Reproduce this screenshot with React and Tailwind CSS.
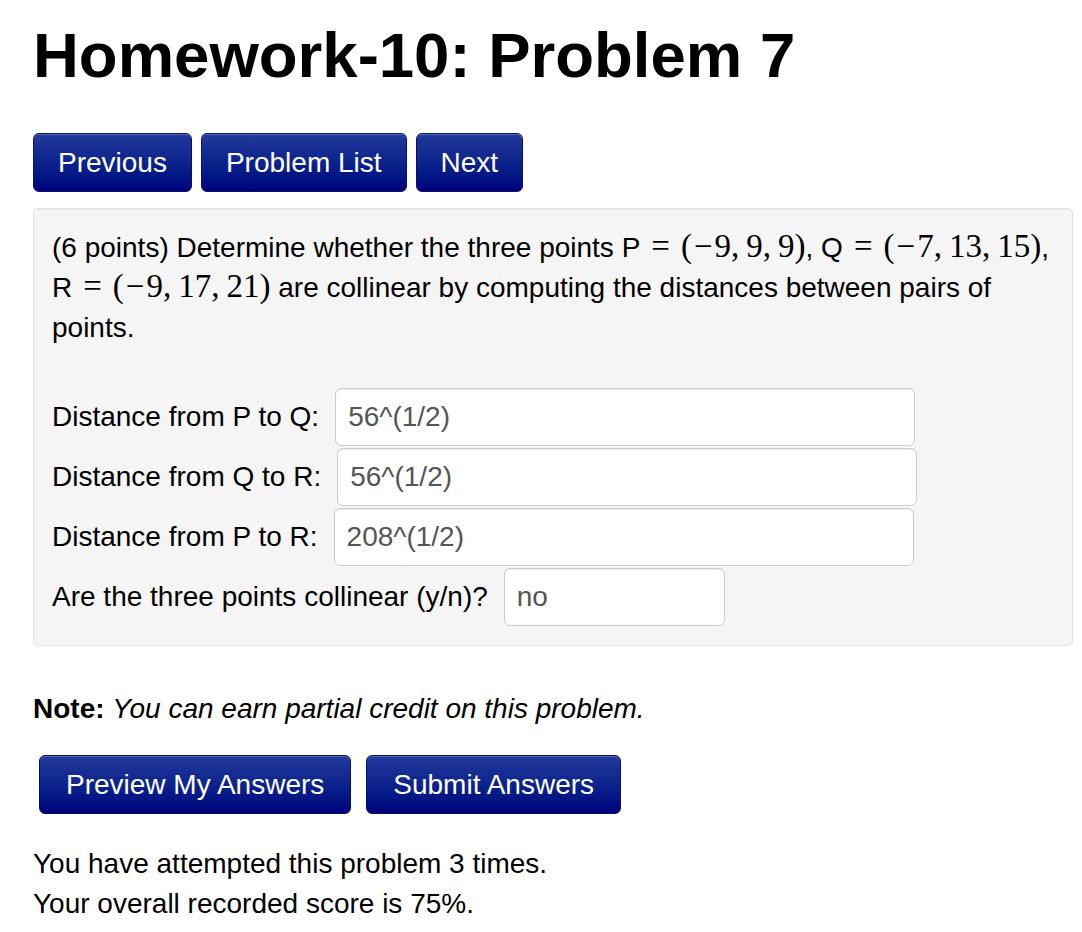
import React from 'react';

const sans = { fontFamily: '"Liberation Sans", Arial, Helvetica, sans-serif' };

const NavButton = ({ children, className = 'px-[24px]' }) => (
  <button
    type="button"
    className={`h-[59px] rounded-[6px] border border-[#0a1260] bg-linear-to-b from-[#223a9c] to-[#00007c] text-white text-[28px] leading-none shadow-[inset_0_1px_0_rgba(255,255,255,0.25)] ${className}`}
  >
    {children}
  </button>
);

// a point like (−9, 17, 21) set roughly the way MathJax spaces it
const Tuple = ({ nums }) => (
  <span className="font-['Liberation_Serif',serif] text-[33px] leading-[20px] whitespace-nowrap">
    (
    {nums.map((n, i) => (
      <span key={i}>
        {n < 0 ? (
          <>
            <span className="mx-[2px]">−</span>
            {-n}
          </>
        ) : (
          n
        )}
        {i < nums.length - 1 && <span className="mr-[7px]">,</span>}
      </span>
    ))}
    )
  </span>
);

const Eq = () => (
  <span className="font-['Liberation_Serif',serif] text-[33px] leading-[20px] mx-[11px]">=</span>
);

const AnswerRow = ({ label, value, width }) => (
  <div className="flex items-center">
    <span className="whitespace-nowrap">{label}</span>
    <input
      readOnly
      value={value}
      className={`ml-[16px] h-[58px] ${width} rounded-[6px] border border-[#cccccc] bg-white px-[12px] text-[28px] text-[#555555] outline-none shadow-[inset_0_1px_1px_rgba(0,0,0,0.075)]`}
      style={sans}
    />
  </div>
);

export default function App() {
  return (
    <div className="min-h-screen bg-white text-black px-[33px] text-[28px] leading-[40px]" style={sans}>
      <h1 className="pt-[21px] text-[63.5px] leading-[69px] font-bold">Homework-10: Problem 7</h1>

      <div className="mt-[43px] flex gap-[9px]">
        <NavButton>Previous</NavButton>
        <NavButton>Problem List</NavButton>
        <NavButton>Next</NavButton>
      </div>

      <div className="mt-[16px] w-[1040px] rounded-[5px] border border-[#e3e3e3] bg-[#f5f5f5] pl-[18px] pr-[12px] pt-[19px] pb-[19px] shadow-[inset_0_1px_1px_rgba(0,0,0,0.05)]">
        <p className="whitespace-nowrap">
          (6 points) Determine whether the three points P<Eq /><Tuple nums={[-9, 9, 9]} />, Q<Eq />
          <Tuple nums={[-7, 13, 15]} />,
          <br />
          R<Eq /><Tuple nums={[-9, 17, 21]} /> are collinear by computing the distances between pairs of
          <br />
          points.
        </p>

        <div className="mt-[40px] flex flex-col gap-[2px]">
          <AnswerRow label="Distance from P to Q:" value="56^(1/2)" width="w-[580px]" />
          <AnswerRow label="Distance from Q to R:" value="56^(1/2)" width="w-[580px]" />
          <AnswerRow label="Distance from P to R:" value="208^(1/2)" width="w-[580px]" />
          <AnswerRow label="Are the three points collinear (y/n)?" value="no" width="w-[221px]" />
        </div>
      </div>

      <p className="mt-[43px]">
        <b>Note:</b> <i>You can earn partial credit on this problem.</i>
      </p>

      <div className="mt-[26px] ml-[6px] flex gap-[15px]">
        <NavButton className="px-[26px]">Preview My Answers</NavButton>
        <NavButton className="px-[26px]">Submit Answers</NavButton>
      </div>

      <div className="mt-[30px] pb-[20px]">
        <p>You have attempted this problem 3 times.</p>
        <p>Your overall recorded score is 75%.</p>
      </div>
    </div>
  );
}
